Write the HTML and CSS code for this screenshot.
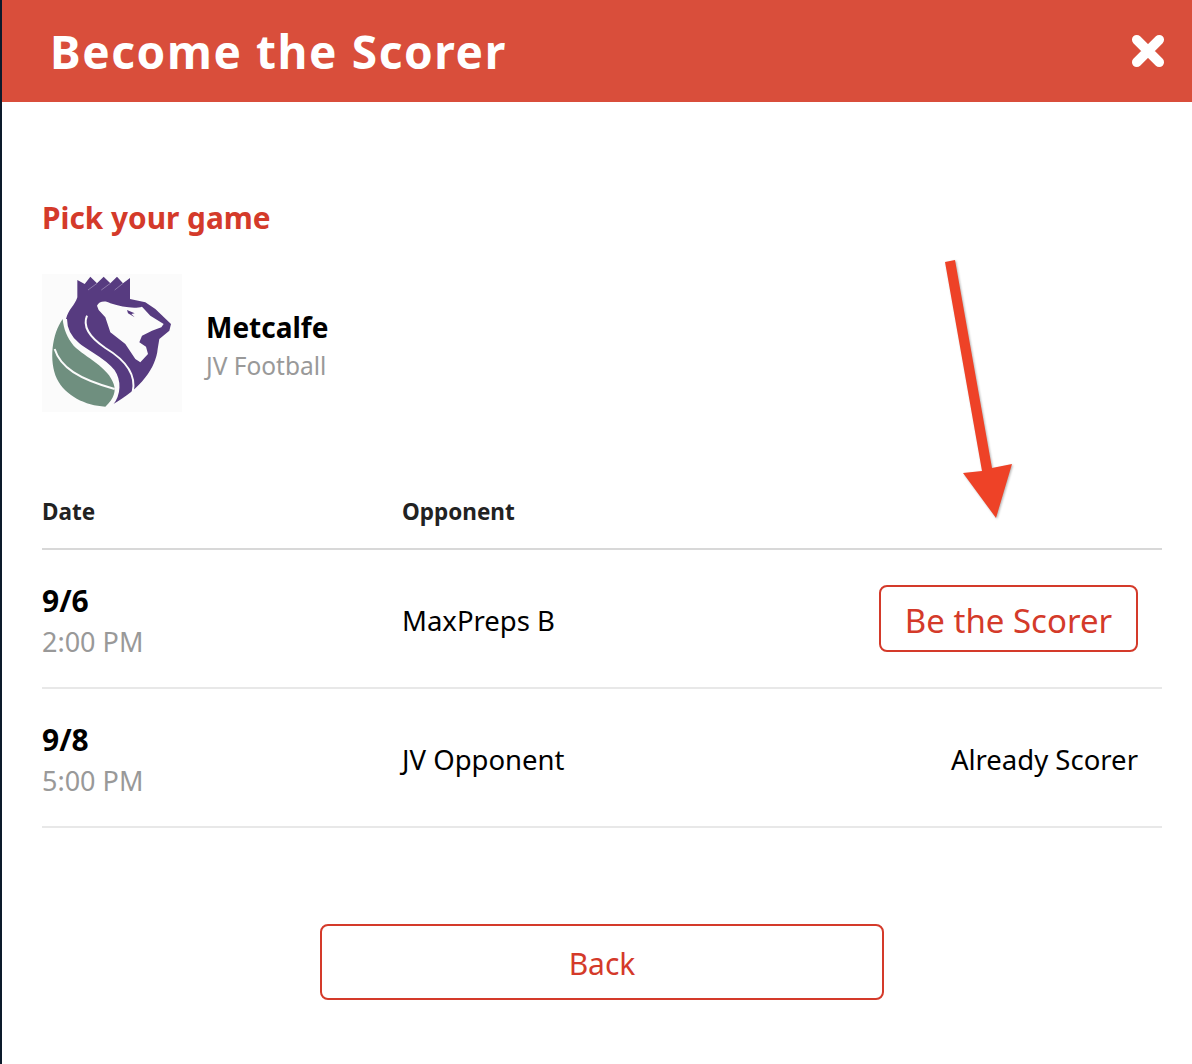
FILE: index.html
```html
<!DOCTYPE html>
<html lang="en">
<head>
    <meta charset="UTF-8">
    <title>Become the Scorer</title>
    <link rel="stylesheet" href="styles.css">
</head>
<body>
    <div class="modal">
        <header class="modal-header">
            <h1 class="modal-title">Become the Scorer</h1>
            <svg class="close-icon" viewBox="0 0 32 32" aria-label="Close"><path d="M6 6 26 26M26 6 6 26"/></svg>
        </header>
        <main class="modal-body">
            <h2 class="pick-title">Pick your game</h2>
            <div class="team">
                <svg class="team-logo" viewBox="0 0 420 414">
                    <rect width="420" height="414" fill="#fbfbfb"/>
                    <path fill="#6f8f7f" d="M62 135C30 180 20 260 45 315 70 365 130 395 190 398 218 372 222 350 215 330 200 280 130 250 95 215 75 190 65 165 62 135Z"/>
                    <path fill="none" stroke="#fbfbfb" stroke-width="6" d="M38 225C55 280 110 315 218 345"/>
                    <path fill="#573b80" d="M106 18 128 30 145 8 165 28 185 8 205 28 225 8 243 28 264 12V75L310 85 340 105 387 150 382 170 352 195 347 225C342 280 297 345 210 392 235 360 235 320 215 290 190 255 140 235 110 210 85 190 72 165 72 135 80 105 98 95 106 70Z"/>
                    <path fill="none" stroke="#fbfbfb" stroke-width="6" d="M72 135C72 165 85 190 110 210 140 235 190 255 215 290 235 320 235 360 210 392"/>
                    <path fill="none" stroke="#fbfbfb" stroke-width="6" d="M135 125C120 160 150 195 190 222 245 255 285 300 272 355"/>
                    <path fill="none" stroke="#a99cc0" stroke-width="2" d="M138 48 165 28M178 48 205 28M218 48 243 28"/>
                    <path fill="#fbfbfb" d="M165 95C170 82 190 78 205 88 240 100 280 105 300 98L325 125 365 150 358 160 330 170 300 185 292 205 312 218 318 240 295 265 280 255 250 210 205 175 190 130 170 108Z"/>
                    <path fill="#573b80" d="M255 108 278 118 268 120 278 130 258 118Z"/>
                </svg>
                <div class="team-info">
                    <div class="team-name">Metcalfe</div>
                    <div class="team-sub">JV Football</div>
                </div>
            </div>
            <div class="row row-head">
                <div class="col-date">Date</div>
                <div class="col-opp">Opponent</div>
            </div>
            <div class="row">
                <div class="col-date"><b>9/6</b><span>2:00 PM</span></div>
                <div class="col-opp">MaxPreps B</div>
                <a class="scorer-btn">Be the Scorer</a>
            </div>
            <div class="row">
                <div class="col-date"><b>9/8</b><span>5:00 PM</span></div>
                <div class="col-opp">JV Opponent</div>
                <div class="already">Already Scorer</div>
            </div>
            <a class="back-btn">Back</a>
        </main>
        <svg class="arrow" viewBox="0 0 72 262"><polygon points="2,3 12,1 49,209 69,205 53,259 20,214 39,212"/></svg>
    </div>
</body>
</html>
```

FILE: styles.css
```css
html, body {
    margin: 0;
    height: 100%;
}
body {
    font-family: "Noto Sans", sans-serif;
    background: #fff;
    color: #000;
}
.modal {
    position: relative;
    height: 1064px;
    overflow: hidden;
    border-left: 2px solid #0c1a2b;
    box-sizing: border-box;
}
.modal-header {
    height: 102px;
    background: #d94e3b;
    display: flex;
    align-items: center;
    justify-content: space-between;
    padding: 0 26px 0 48px;
}
.modal-title {
    margin: 0;
    color: #fff;
    font-size: 46px;
    font-weight: 700;
    letter-spacing: 1.6px;
}
.close-icon {
    width: 36px;
    height: 36px;
    fill: none;
    stroke: #fff;
    stroke-width: 8.5;
    stroke-linecap: round;
}
.modal-body {
    padding: 96px 30px 0 40px;
}
.pick-title {
    margin: 0;
    color: #d43a2a;
    font-size: 29.8px;
    font-weight: 700;
    line-height: 40px;
}
.team {
    display: flex;
    align-items: center;
    margin-top: 36px;
}
.team-logo {
    width: 140px;
    height: 138px;
}
.team-info {
    margin-left: 24px;
    padding-top: 10px;
}
.team-name {
    font-size: 28px;
    font-weight: 700;
    line-height: 36px;
}
.team-sub {
    font-size: 24.5px;
    color: #999;
    line-height: 42px;
}
.row {
    display: flex;
    align-items: center;
    height: 137px;
    border-bottom: 2px solid #e8e8e8;
    font-size: 27.5px;
}
.row-head {
    height: 52px;
    padding-top: 5px;
    margin-top: 79px;
    border-bottom-color: #d8d8d8;
    font-size: 22.5px;
    font-weight: 700;
    color: #222;
    align-items: flex-start;
}
.col-date {
    width: 360px;
    display: flex;
    flex-direction: column;
}
.row:not(.row-head) .col-date {
    padding-top: 5px;
}
.col-date b {
    font-size: 30px;
    line-height: 40px;
}
.col-date span {
    color: #999;
    font-size: 27px;
    line-height: 41px;
}
.col-opp {
    flex: 1;
}
.row:not(.row-head) .col-opp,
.already {
    padding-top: 4px;
}
.scorer-btn {
    box-sizing: border-box;
    width: 259px;
    height: 67px;
    margin-right: 24px;
    padding-top: 4px;
    border: 2px solid #d43a2a;
    border-radius: 8px;
    color: #d43a2a;
    font-size: 33px;
    display: flex;
    align-items: center;
    justify-content: center;
}
.already {
    margin-right: 24px;
}
.back-btn {
    box-sizing: border-box;
    width: 564px;
    height: 76px;
    margin: 96px 0 0 278px;
    padding-top: 2px;
    border: 2px solid #d43a2a;
    border-radius: 8px;
    color: #d43a2a;
    font-size: 30px;
    display: flex;
    align-items: center;
    justify-content: center;
}
.arrow {
    position: absolute;
    left: 941px;
    top: 259px;
    width: 72px;
    height: 262px;
    fill: #ee4227;
    filter: drop-shadow(1px 1px 1px rgba(0, 0, 0, 0.3));
}
```
